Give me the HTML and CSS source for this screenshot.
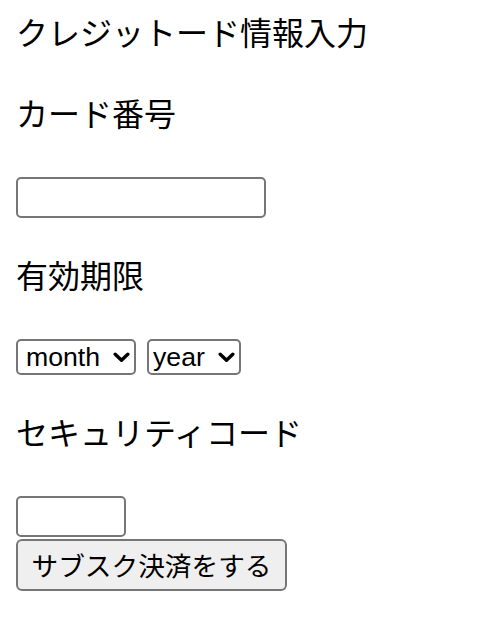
FILE: index.html
```
<!DOCTYPE html>
<html lang="ja">
<head>
<meta charset="utf-8">
<title>クレジットード情報入力</title>
<link rel="stylesheet" href="styles.css">
</head>
<body>
<form class="form">
  <p class="label title">クレジットード情報入力</p>
  <p class="label">カード番号</p>
  <input class="field card" type="text">
  <p class="label">有効期限</p>
  <div class="expiry">
    <span class="sel">
      <select class="select month"><option>month</option></select>
      <svg class="chev" width="17" height="11" viewBox="0 0 17 11"><path d="M2.2 2.2 L8.5 8.3 L14.8 2.2" fill="none" stroke="#000" stroke-width="3.4" stroke-linecap="round" stroke-linejoin="round"/></svg>
    </span>
    <span class="sel">
      <select class="select year"><option>year</option></select>
      <svg class="chev" width="17" height="11" viewBox="0 0 17 11"><path d="M2.2 2.2 L8.5 8.3 L14.8 2.2" fill="none" stroke="#000" stroke-width="3.4" stroke-linecap="round" stroke-linejoin="round"/></svg>
    </span>
  </div>
  <p class="label">セキュリティコード</p>
  <input class="field cvc" type="text">
  <button class="submit" type="button">サブスク決済をする</button>
</form>
</body>
</html>
```
FILE: styles.css
```
html, body {
  margin: 0;
  padding: 0;
  background: #fff;
}
body {
  padding: 0 16px;
  font-family: "Noto Sans CJK JP", "Liberation Sans", sans-serif;
  color: #000;
}
.form {
  display: flow-root;
}
.label {
  font-size: 32px;
  line-height: 32px;
  margin: 40px 0 49px;
  white-space: nowrap;
}
.title {
  margin-top: 15px;
}
.field {
  display: block;
  box-sizing: border-box;
  height: 41px;
  border: 2px solid #767676;
  border-radius: 5px;
  background: #fff;
  margin: 0;
  padding: 0 6px;
  font-size: 26px;
}
.card {
  width: 250px;
}
.cvc {
  width: 110px;
}
.expiry {
  display: flex;
  gap: 11px;
  align-items: flex-start;
}
.sel {
  position: relative;
  display: block;
}
.select {
  display: block;
  box-sizing: border-box;
  appearance: none;
  -webkit-appearance: none;
  height: 36px;
  margin: 0;
  border: 2px solid #767676;
  border-radius: 5px;
  background: #fff;
  color: #000;
  font-family: "Liberation Sans", Arial, sans-serif;
  font-size: 26.67px;
  line-height: 30px;
}
.month {
  width: 120px;
  padding: 0 0 0 8px;
}
.year {
  width: 94px;
  padding: 0 0 0 4px;
}
.chev {
  position: absolute;
  right: 6px;
  top: 50%;
  margin-top: -5px;
  pointer-events: none;
}
.submit {
  display: block;
  box-sizing: border-box;
  width: 271px;
  height: 52px;
  margin: 2px 0 0;
  padding: 0;
  border: 2px solid #767676;
  border-radius: 6px;
  background: #efefef;
  color: #000;
  font-family: "Noto Sans CJK JP", sans-serif;
  font-size: 26.67px;
  line-height: 1;
  text-align: center;
}
```
